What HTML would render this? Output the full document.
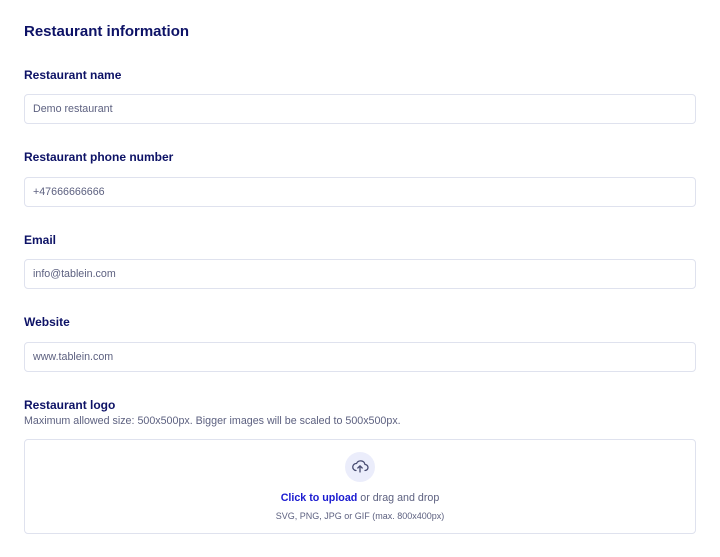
<!DOCTYPE html><html><head><style>
body{margin:0;background:#fff;font-family:"Liberation Sans",sans-serif;width:720px;height:557px;overflow:hidden;position:relative}
h1{position:absolute;left:24px;top:23px;margin:0;font-size:15px;font-weight:bold;color:#0d1266}
.l{position:absolute;left:24px;font-size:12px;font-weight:bold;color:#0d1266}
.i{position:absolute;left:24px;height:28px;border:1px solid #dfe2ee;border-radius:4px;font-size:10.7px;color:#5d6180;line-height:28px;padding-left:8px;width:662px}
</style></head><body>
<h1>Restaurant information</h1>
<div class="l" style="top:68px">Restaurant name</div>
<div class="i" style="top:94px">Demo restaurant</div>
<div class="l" style="top:150px">Restaurant phone number</div>
<div class="i" style="top:177px">+47666666666</div>
<div class="l" style="top:233px">Email</div>
<div class="i" style="top:259px">info@tablein.com</div>
<div class="l" style="top:315px">Website</div>
<div class="i" style="top:342px">www.tablein.com</div>
<div class="l" style="top:398px">Restaurant logo</div>
<div style="position:absolute;left:24px;top:415px;font-size:10.7px;color:#5d6180">Maximum allowed size: 500x500px. Bigger images will be scaled to 500x500px.</div>
<div style="position:absolute;left:24px;top:439px;width:670px;height:93px;border:1px solid #dfe2ee;border-radius:4px">
<div style="position:absolute;left:320px;top:12px;width:30px;height:30px;border-radius:50%;background:#ebedfb">
<svg width="30" height="30" viewBox="0 0 30 30"><path d="M11 18.5a3.5 3.5 0 0 1 .5-7 4.5 4.5 0 0 1 8.5 1 3 3 0 0 1 0 6M15 20v-6M12.8 16l2.2-2.2 2.2 2.2" fill="none" stroke="#474b70" stroke-width="1.3" stroke-linecap="round" stroke-linejoin="round"/></svg></div>
<div style="position:absolute;left:0;right:0;top:52px;text-align:center;font-size:10.7px;color:#5d6180"><b style="color:#1a1ad0">Click to upload</b> or drag and drop</div>
<div style="position:absolute;left:0;right:0;top:71px;text-align:center;font-size:9px;color:#5d6180">SVG, PNG, JPG or GIF (max. 800x400px)</div>
</div>
</body></html>
